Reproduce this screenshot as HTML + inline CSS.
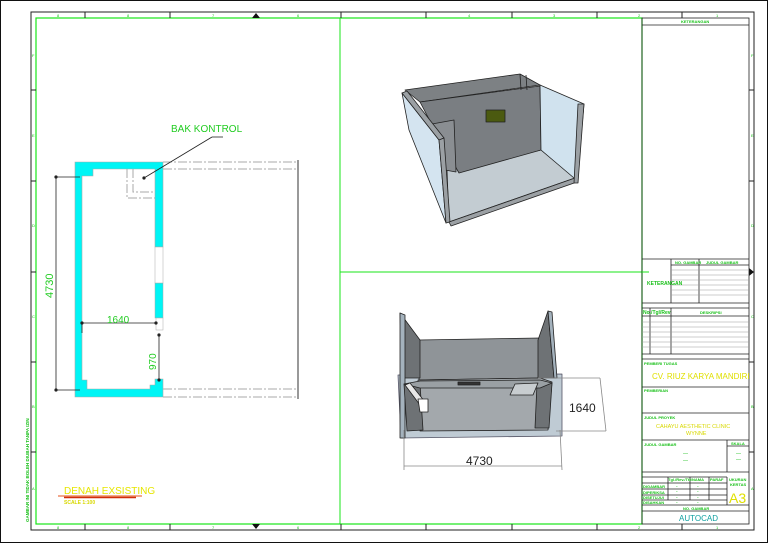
<!DOCTYPE html>
<html><head><meta charset="utf-8"><style>
html,body{margin:0;padding:0;background:#fff}
svg{display:block}
text{font-family:"Liberation Sans",sans-serif}
</style></head><body>
<svg width="768" height="543" viewBox="0 0 768 543" xmlns="http://www.w3.org/2000/svg">
<rect x="0.5" y="0.5" width="767" height="542" fill="#fff" stroke="#111" stroke-width="1"/>
<rect x="31" y="12" width="723" height="518" fill="none" stroke="#222" stroke-width="1"/>
<rect x="36" y="18" width="606" height="506" fill="none" stroke="#19e619" stroke-width="1.2"/>
<line x1="340" y1="18" x2="340" y2="524" stroke="#19e619" stroke-width="1"/>
<line x1="340" y1="272" x2="642" y2="272" stroke="#19e619" stroke-width="1"/>
<g stroke="#222" stroke-width="1">
<line x1="85" y1="12" x2="85" y2="18"/><line x1="170" y1="12" x2="170" y2="18"/><line x1="341" y1="12" x2="341" y2="18"/><line x1="426" y1="12" x2="426" y2="18"/><line x1="512" y1="12" x2="512" y2="18"/><line x1="597" y1="12" x2="597" y2="18"/><line x1="682" y1="12" x2="682" y2="18"/>
<line x1="85" y1="524" x2="85" y2="530"/><line x1="170" y1="524" x2="170" y2="530"/><line x1="341" y1="524" x2="341" y2="530"/><line x1="426" y1="524" x2="426" y2="530"/><line x1="512" y1="524" x2="512" y2="530"/><line x1="597" y1="524" x2="597" y2="530"/><line x1="682" y1="524" x2="682" y2="530"/>
<line x1="31" y1="90" x2="36" y2="90"/><line x1="31" y1="181" x2="36" y2="181"/><line x1="31" y1="272" x2="36" y2="272"/><line x1="31" y1="362" x2="36" y2="362"/><line x1="31" y1="452" x2="36" y2="452"/>
<line x1="749" y1="90" x2="754" y2="90"/><line x1="749" y1="181" x2="754" y2="181"/><line x1="749" y1="362" x2="754" y2="362"/><line x1="749" y1="452" x2="754" y2="452"/>
</g>
<polygon points="252,18 256,13 260,18" fill="#111"/>
<polygon points="252,524 256,529 260,524" fill="#111"/>
<polygon points="749,268 754,272 749,276" fill="#111"/>
<g fill="#19c019" font-size="4">
<text x="57" y="17">8</text><text x="127" y="17">8</text><text x="212" y="17">7</text><text x="297" y="17">6</text><text x="468" y="17">4</text><text x="553" y="17">3</text><text x="638" y="17">2</text><text x="716" y="17">1</text>
<text x="57" y="529">8</text><text x="127" y="529">8</text><text x="212" y="529">7</text><text x="297" y="529">6</text><text x="638" y="529">2</text><text x="716" y="529">1</text>
<text x="32" y="57">F</text><text x="32" y="137">E</text><text x="32" y="227">D</text><text x="32" y="318">C</text><text x="32" y="408">B</text><text x="32" y="490">A</text>
<text x="751" y="57">F</text><text x="751" y="137">E</text><text x="751" y="227">D</text><text x="751" y="318">C</text><text x="751" y="408">B</text><text x="751" y="490">A</text>
</g>
<text transform="translate(29,522) rotate(-90)" font-size="4.5" fill="#19c019" font-weight="bold">GAMBAR INI TIDAK BOLEH DIUBAH TANPA IZIN</text>

<!-- Plan -->
<g>
<g stroke="#aaa" stroke-width="1" stroke-dasharray="9,2,2,2" fill="none">
<line x1="163" y1="162" x2="298" y2="162"/><line x1="163" y1="169" x2="298" y2="169"/>
<line x1="163" y1="389" x2="298" y2="389"/><line x1="163" y1="397" x2="298" y2="397"/>
<polyline points="127,169 127,198 155,198"/><polyline points="133,169 133,192 155,192"/>
</g>
<line x1="298" y1="160" x2="298" y2="399" stroke="#333" stroke-width="1"/>
<path d="M75,162 H163 V247 H155 V169 H93 V176 H82 V380 H87 V389 H150 V385 H155 V379 H163 V397 H75 Z" fill="#00f5f5" stroke="#aaa" stroke-width="0.6"/>
<rect x="155" y="283" width="8" height="35" fill="#00f5f5" stroke="#aaa" stroke-width="0.5"/>
<rect x="155" y="247" width="8" height="36" fill="#fff" stroke="#aaa" stroke-width="0.5"/>
<rect x="156" y="318" width="7" height="12" fill="#fff" stroke="#aaa" stroke-width="0.5"/>
<g stroke="#222" stroke-width="0.8" fill="#222">
<line x1="56" y1="177" x2="80" y2="177"/><line x1="56" y1="390" x2="80" y2="390"/>
<line x1="56" y1="177" x2="56" y2="390"/>
<circle cx="56" cy="177" r="1.2"/><circle cx="56" cy="390" r="1.2"/>
<line x1="82" y1="323" x2="156" y2="323"/><circle cx="82" cy="323" r="1.2"/><circle cx="156" cy="323" r="1.2"/>
<line x1="82" y1="323" x2="82" y2="333"/>
<line x1="159" y1="335" x2="159" y2="380"/><circle cx="159" cy="335" r="1.2"/><circle cx="159" cy="380" r="1.2"/>
<line x1="144" y1="178" x2="212" y2="137"/><line x1="212" y1="137" x2="223" y2="137"/><circle cx="144" cy="178" r="1.2"/>
</g>
<g fill="#22cc22" font-size="10">
<text x="171" y="132">BAK KONTROL</text>
<text x="107" y="323">1640</text>
<text transform="translate(53,298) rotate(-90)" font-size="11">4730</text>
<text transform="translate(156,370) rotate(-90)" font-size="10">970</text>
</g>
<text x="64" y="494" font-size="10" fill="#e6e600">DENAH EXSISTING</text>
<line x1="58" y1="496" x2="142" y2="496" stroke="#e5501a" stroke-width="1"/>
<line x1="64" y1="497.5" x2="136" y2="497.5" stroke="#d0300a" stroke-width="1.6"/>
<text x="64" y="504" font-size="5" fill="#d8d800" font-weight="bold">SCALE 1:100</text>
</g>

<!-- 3D top -->
<g stroke="#222" stroke-width="0.8" stroke-linejoin="round">
<polygon points="405,90 520,74 540,85 420,102" fill="#7d8184"/>
<polygon points="447,170 541,150 575,178 449,222" fill="#c3ccd2"/>
<polygon points="420,102 540,86 541,150 459,173 440,140" fill="#7a7e82"/>
<polygon points="540,85 584,104 577,182 574,178 541,150" fill="#d0e2ee"/>
<polygon points="432,124 454,120 456,172 445,170" fill="#8a8e92"/>
<polygon points="402,93 439,140 446,223 409,130" fill="#d4e4f0"/>
<polygon points="402,93 407,91 444,138 439,140" fill="#9ba0a4"/>
<polygon points="439,140 444,138 450,222 446,223" fill="#9ba0a4"/>
<polygon points="449,222 575,178 577,182 451,226" fill="#9ba0a4"/>
<rect x="486" y="110" width="19" height="12" fill="#4b5a10"/>
<polygon points="578,104 584,104 578,183 574,183" fill="#9ba0a4"/>
<line x1="520" y1="74" x2="521" y2="90"/>
<line x1="526" y1="75" x2="527" y2="90"/>
</g>

<!-- 3D bottom -->
<g stroke="#222" stroke-width="0.8" stroke-linejoin="round">
<polygon points="398,375 562,374 562,436 401,438" fill="#bfcbd4" stroke="#556"/>
<polygon points="419,340 540,338 540,378 419,380" fill="#8f9498"/>
<polygon points="418,380 540,378 552,382 548,430 420,431" fill="#a3a8ac"/>
<polygon points="400,313 420,340 420,378 402,378" fill="#6e7275"/>
<polygon points="400,313 405,315 405,438 400,438" fill="#a4b2bd"/>
<polygon points="548,311 538,340 538,378 554,378" fill="#6e7275"/>
<polygon points="548,311 552,312 557,378 554,378" fill="#a4b2bd"/>
<polygon points="404,384 420,384 423,430 407,431" fill="#6e7275"/>
<polygon points="537,384 552,383 549,428 535,428" fill="#6e7275"/>
<polygon points="404,384 420,381 540,380 552,383 540,388 420,388" fill="#9aa0a4"/>
<rect x="458" y="382" width="22" height="3" fill="#333"/>
<polygon points="515,384 538,383 533,395 510,395" fill="#c8cdd0"/>
<polygon points="405,385 410,383 425,402 420,405" fill="#e8e8e8"/>
<polygon points="418,399 428,399 428,412 420,412" fill="#fff"/>
</g>
<g stroke="#888" stroke-width="0.8" fill="none">
<line x1="538" y1="378" x2="600" y2="378"/><line x1="556" y1="431" x2="606" y2="431"/>
<line x1="600" y1="378" x2="606" y2="431"/>
<line x1="404" y1="430" x2="404" y2="470"/><line x1="560" y1="430" x2="562" y2="470"/>
<line x1="404" y1="466" x2="562" y2="466"/>
</g>
<text x="569" y="412" font-size="12" fill="#222">1640</text>
<text x="466" y="465" font-size="12" fill="#222">4730</text>

<!-- Title block -->
<g stroke="#222" stroke-width="0.8" fill="none">
<rect x="642" y="18" width="107" height="506"/>
<line x1="642" y1="25" x2="749" y2="25"/>
<line x1="642" y1="259" x2="749" y2="259"/>
<line x1="671" y1="259" x2="671" y2="303"/><line x1="699" y1="259" x2="699" y2="303"/>
<line x1="671" y1="265" x2="749" y2="265"/>
<line x1="642" y1="303" x2="749" y2="303"/><line x1="642" y1="308" x2="749" y2="308"/>
<line x1="642" y1="316" x2="749" y2="316"/>
<line x1="650" y1="308" x2="650" y2="354"/><line x1="671" y1="308" x2="671" y2="354"/>
<line x1="642" y1="354" x2="749" y2="354"/><line x1="642" y1="359" x2="749" y2="359"/>
<line x1="642" y1="387" x2="749" y2="387"/>
<line x1="642" y1="413" x2="749" y2="413"/>
<line x1="642" y1="440" x2="749" y2="440"/>
<line x1="727" y1="440" x2="727" y2="472"/><line x1="727" y1="446" x2="749" y2="446"/>
<line x1="642" y1="472" x2="749" y2="472"/>
<line x1="642" y1="477" x2="727" y2="477"/>
<line x1="668" y1="477" x2="668" y2="500"/><line x1="690" y1="477" x2="690" y2="500"/><line x1="709" y1="477" x2="709" y2="500"/><line x1="727" y1="477" x2="727" y2="505"/>
<line x1="642" y1="483" x2="727" y2="483"/><line x1="642" y1="489" x2="727" y2="489"/><line x1="642" y1="495" x2="727" y2="495"/><line x1="642" y1="500" x2="727" y2="500"/>
<line x1="642" y1="505" x2="749" y2="505"/><line x1="642" y1="511" x2="749" y2="511"/>
</g>
<g stroke="#999" stroke-width="0.6">
<line x1="671" y1="270" x2="749" y2="270"/><line x1="671" y1="275" x2="749" y2="275"/><line x1="671" y1="280" x2="749" y2="280"/><line x1="671" y1="285" x2="749" y2="285"/><line x1="671" y1="290" x2="749" y2="290"/><line x1="671" y1="295" x2="749" y2="295"/>
<line x1="642" y1="322" x2="749" y2="322"/><line x1="642" y1="327" x2="749" y2="327"/><line x1="642" y1="332" x2="749" y2="332"/><line x1="642" y1="337" x2="749" y2="337"/><line x1="642" y1="342" x2="749" y2="342"/><line x1="642" y1="347" x2="749" y2="347"/>
</g>
<line x1="642" y1="272" x2="649" y2="272" stroke="#19e619"/>
<g fill="#19c019" font-size="4" font-weight="bold">
<text x="681" y="23">KETERANGAN</text>
<text x="675" y="264">NO. GAMBAR</text><text x="706" y="264">JUDUL GAMBAR</text>
<text x="647" y="285" font-size="5">KETERANGAN</text>
<text x="643" y="314" font-size="5">No./Tgl/Rev</text><text x="700" y="314">DESKRIPSI</text>
<text x="644" y="365">PEMBERI TUGAS</text>
<text x="644" y="392">PEMBERIAN</text>
<text x="644" y="419">JUDUL PROYEK</text>
<text x="644" y="446">JUDUL GAMBAR</text><text x="731" y="445">SKALA</text>
<text x="668" y="481">Tgl./Rev./Ttd</text><text x="692" y="481">NAMA</text><text x="710" y="481">PARAF</text>
<text x="729" y="481">UKURAN</text><text x="730" y="486">KERTAS</text>
<text x="643" y="488">DIGAMBAR</text><text x="643" y="494">DIPERIKSA</text><text x="643" y="499">DISETUJUI</text><text x="643" y="504">DISAHKAN</text>
<text x="683" y="510">NO. GAMBAR</text>
</g>
<text x="652" y="379" font-size="8" fill="#e0e000">CV. RIUZ KARYA MANDIRI</text>
<text x="656" y="428" font-size="5.5" fill="#d8d800">CAHAYU AESTHETIC CLINIC</text>
<text x="686" y="435" font-size="5.5" fill="#d8d800">WYNNE</text>
<text x="729" y="503" font-size="14" fill="#e0e000">A3</text>
<text x="679" y="521" font-size="8" fill="#10a0a0">AUTOCAD</text>
<g fill="#19c019" font-size="5"><text x="683" y="455">—</text><text x="683" y="462">—</text><text x="736" y="455">—</text><text x="736" y="461">—</text>
<text x="676" y="488">-</text><text x="697" y="488">-</text><text x="676" y="493">-</text><text x="697" y="493">-</text><text x="676" y="499">-</text><text x="697" y="499">-</text><text x="676" y="504">-</text><text x="697" y="504">-</text></g>
</svg>
</body></html>
